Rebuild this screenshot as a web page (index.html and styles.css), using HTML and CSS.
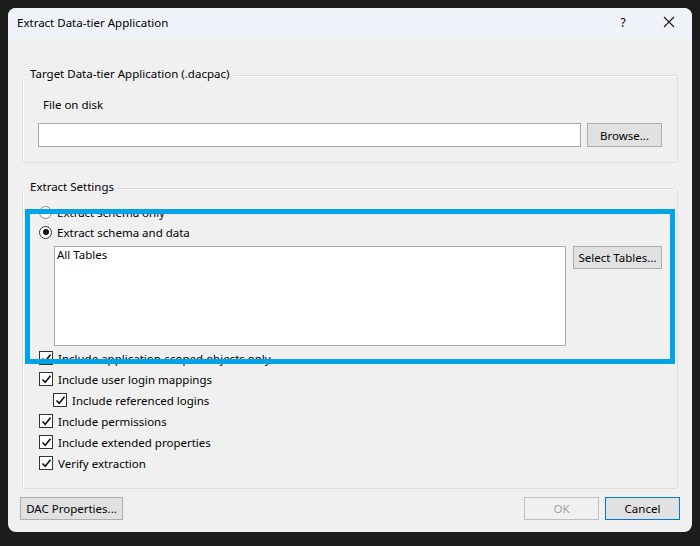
FILE: index.html
```html
<!DOCTYPE html>
<html>
<head>
<meta charset="utf-8">
<link rel="stylesheet" href="styles.css">
</head>
<body>
<div class="window">
  <div class="titlebar">
    <span class="title">Extract Data-tier Application</span>
    <span class="help">?</span>
    <span class="close"><svg width="12" height="12" viewBox="0 0 12 12"><path d="M1 1 L11 11 M11 1 L1 11" stroke="#1a1a1a" stroke-width="1.1" fill="none"/></svg></span>
  </div>
  <div class="group group1">
    <span class="legend">Target Data-tier Application (.dacpac)</span>
    <div class="label">File on disk</div>
    <div class="filerow">
      <div class="textbox"></div>
      <div class="btn browse">Browse...</div>
    </div>
  </div>
  <div class="group group2">
    <span class="legend">Extract Settings</span>
    <div class="row"><span class="radio"></span><span>Extract schema only</span></div>
    <div class="row"><span class="radio on"></span><span>Extract schema and data</span></div>
    <div class="tablesrow">
      <div class="listbox">All Tables</div>
      <div class="btn select">Select Tables...</div>
    </div>
    <div class="checks">
      <div class="row"><span class="check"><svg width="11" height="11" viewBox="0 0 11 11"><path d="M1.5 5.5 L4.2 8.3 L9.5 1.8" stroke="#111" stroke-width="1.6" fill="none"/></svg></span><span>Include application-scoped objects only</span></div>
      <div class="row"><span class="check"><svg width="11" height="11" viewBox="0 0 11 11"><path d="M1.5 5.5 L4.2 8.3 L9.5 1.8" stroke="#111" stroke-width="1.6" fill="none"/></svg></span><span>Include user login mappings</span></div>
      <div class="row indent"><span class="check"><svg width="11" height="11" viewBox="0 0 11 11"><path d="M1.5 5.5 L4.2 8.3 L9.5 1.8" stroke="#111" stroke-width="1.6" fill="none"/></svg></span><span>Include referenced logins</span></div>
      <div class="row"><span class="check"><svg width="11" height="11" viewBox="0 0 11 11"><path d="M1.5 5.5 L4.2 8.3 L9.5 1.8" stroke="#111" stroke-width="1.6" fill="none"/></svg></span><span>Include permissions</span></div>
      <div class="row"><span class="check"><svg width="11" height="11" viewBox="0 0 11 11"><path d="M1.5 5.5 L4.2 8.3 L9.5 1.8" stroke="#111" stroke-width="1.6" fill="none"/></svg></span><span>Include extended properties</span></div>
      <div class="row"><span class="check"><svg width="11" height="11" viewBox="0 0 11 11"><path d="M1.5 5.5 L4.2 8.3 L9.5 1.8" stroke="#111" stroke-width="1.6" fill="none"/></svg></span><span>Verify extraction</span></div>
    </div>
  </div>
  <div class="buttons">
    <div class="btn dac">DAC Properties...</div>
    <div class="spacer"></div>
    <div class="btn ok">OK</div>
    <div class="btn cancel">Cancel</div>
  </div>
</div>
<div class="highlight"></div>
</body>
</html>
```
FILE: styles.css
```css
html, body {
  margin: 0;
  padding: 0;
  background: #1c1c1c;
  width: 700px;
  height: 546px;
  overflow: hidden;
}
body {
  position: relative;
  padding: 8px;
  box-sizing: border-box;
  font-family: "Noto Sans", "Open Sans", sans-serif;
  font-size: 11.5px;
  color: #000;
}
.window {
  width: 684px;
  height: 524px;
  background: #f0f0f0;
  border-radius: 8px;
  overflow: hidden;
  display: flex;
  flex-direction: column;
}
.titlebar {
  height: 30px;
  box-sizing: border-box;
  padding-bottom: 2px;
  background: #eff2f8;
  display: flex;
  align-items: center;
  flex-shrink: 0;
}
.title {
  margin-left: 9px;
  flex: 1;
  font-size: 11.5px;
}
.help {
  width: 12px;
  text-align: center;
  margin-right: 34px;
  font-size: 12px;
}
.close {
  display: flex;
  width: 12px;
  margin-right: 17px;
}
.group {
  position: relative;
  margin: 0 14px;
  border: 1px solid #d9dfe3;
  border-radius: 3px;
  box-shadow: inset 1px 1px 0 #fff;
}
.legend {
  position: absolute;
  top: -10px;
  left: 4px;
  padding: 0 3px;
  background: #f0f0f0;
  line-height: 16px;
}
.group1 {
  margin-top: 37px;
  padding: 21px 15px 15px 15px;
}
.label {
  line-height: 16px;
  padding-left: 5px;
}
.filerow {
  display: flex;
  gap: 6px;
  margin-top: 10px;
}
.textbox {
  width: 543px;
  height: 24px;
  box-sizing: border-box;
  background: #fff;
  border: 1px solid #a9a9a9;
}
.btn {
  box-sizing: border-box;
  height: 24px;
  background: #e1e1e1;
  border: 1px solid #adadad;
  display: flex;
  align-items: center;
  justify-content: center;
}
.browse { width: 75px; }
.group2 {
  margin-top: 25px;
  padding: 15px 14px 17px 16px;
  display: flex;
  flex-direction: column;
}
.row {
  display: flex;
  align-items: center;
  height: 16px;
  gap: 5px;
}
.row + .row { margin-top: 4px; }
.radio {
  width: 13px;
  height: 13px;
  box-sizing: border-box;
  border: 1px solid #8a8a8a;
  border-radius: 50%;
  background: #fff;
  display: flex;
  align-items: center;
  justify-content: center;
}
.radio.on { border-color: #333; }
.radio.on::after {
  content: "";
  width: 6px;
  height: 6px;
  border-radius: 50%;
  background: #111;
}
.tablesrow {
  display: flex;
  gap: 7px;
  margin-top: 6px;
  align-items: flex-start;
}
.listbox {
  margin-left: 15px;
  width: 512px;
  height: 100px;
  flex-shrink: 0;
  box-sizing: border-box;
  background: #fff;
  border: 1px solid #a9a9a9;
  padding: 0 2px;
  line-height: 15px;
}
.select { width: 89px; height: 23px; flex-shrink: 0; }
.checks {
  margin-top: 4px;
  display: flex;
  flex-direction: column;
}
.checks .row + .row { margin-top: 5px; }
.check {
  width: 14px;
  height: 14px;
  box-sizing: border-box;
  border: 1px solid #333;
  background: #fff;
  display: flex;
  align-items: center;
  justify-content: center;
}
.indent { padding-left: 14px; }
.buttons {
  display: flex;
  margin: 8px 12px 0 12px;
  gap: 6px;
}
.buttons .btn { height: 23px; }
.dac { width: 103px; }
.spacer { flex: 1; }
.ok {
  width: 75px;
  background: #f0f0f0;
  border-color: #bfbfbf;
  color: #a0a0a0;
}
.cancel {
  width: 75px;
  border-color: #0078d7;
}
.highlight {
  position: absolute;
  left: 25px;
  top: 209px;
  width: 650px;
  height: 155px;
  box-sizing: border-box;
  border: 5px solid #00a2e8;
}
```
